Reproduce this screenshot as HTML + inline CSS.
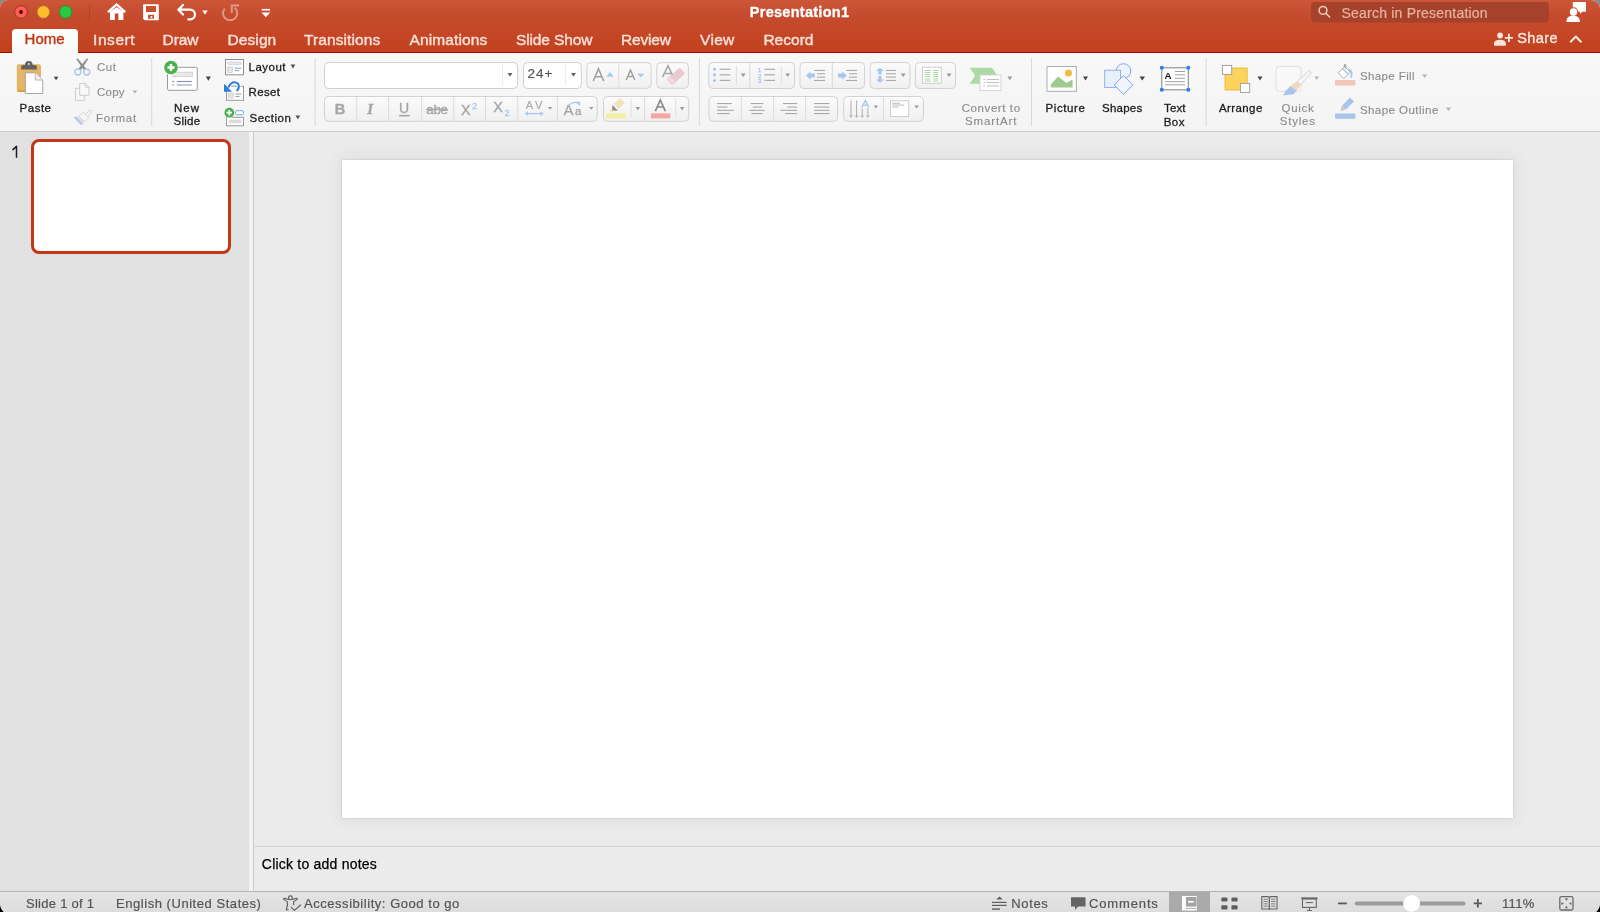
<!DOCTYPE html>
<html><head><meta charset="utf-8">
<style>
*{box-sizing:border-box;margin:0;padding:0}
html,body{width:1600px;height:912px;overflow:hidden;background:linear-gradient(#8a8a8a 0,#8a8a8a 40px,#000 41px)}
body{font-family:"Liberation Sans",sans-serif;position:relative}
.a{position:absolute}
.t{position:absolute;white-space:nowrap;line-height:1}
#win{position:absolute;left:0;top:0;width:1600px;height:915px;background:#ebebeb;border-radius:8px 9px 12px 12px;overflow:hidden}
#title{left:0;top:0;width:1600px;height:53px;background:linear-gradient(#cc5638 0px,#c64b2e 16px,#c2421f 50px);border-bottom:1px solid #a40b00}
#ribbon{left:0;top:53px;width:1600px;height:79px;background:linear-gradient(#f8f8f8,#f4f4f4);border-bottom:1px solid #cdcdcd}
svg{position:absolute;left:0;top:0;will-change:transform}
</style></head>
<body>
<div id="win">
<div id="title" class="a"></div>
<div class="a" style="left:12px;top:29px;width:66px;height:25px;background:linear-gradient(#ffffff,#f8f8f8);border-radius:4px 4px 0 0"></div>
<div id="ribbon" class="a"></div>
<div class="a" style="left:0;top:132px;width:249px;height:759px;background:#e1e1e1"></div>
<div class="a" style="left:249px;top:132px;width:4px;height:759px;background:#f3f3f3"></div>
<div class="a" style="left:253px;top:132px;width:1px;height:759px;background:#cacaca"></div>
<div class="a" style="left:31px;top:139px;width:200px;height:115px;border:3.3px solid #c23816;border-radius:8px;background:#fff"></div>
<div class="a" style="left:342px;top:160px;width:1171px;height:658px;background:#fff;box-shadow:0 0 2px rgba(0,0,0,0.16),0 0 16px 3px rgba(0,0,0,0.055)"></div>
<div class="a" style="left:254px;top:846px;width:1346px;height:1px;background:#d2d2d2"></div>
<div class="a" style="left:0;top:891px;width:1600px;height:1px;background:#b3b3b3"></div>
<div class="a" style="left:0;top:892px;width:1600px;height:20px;background:linear-gradient(#e4e4e4,#dddddd)"></div>
<div class="a" style="left:1169px;top:892px;width:41px;height:20px;background:#aaaaaa"></div>

<svg width="1600" height="912" viewBox="0 0 1600 912">
<defs>
<linearGradient id="btn" x1="0" y1="0" x2="0" y2="1"><stop offset="0" stop-color="#fbfbfb"/><stop offset="1" stop-color="#f0f0f0"/></linearGradient>
</defs>
<!-- ===== TITLE BAR ===== -->
<circle cx="21" cy="12" r="6.3" fill="#fe5f57" stroke="#a8301f" stroke-width="1"/>
<circle cx="21" cy="12" r="1.9" fill="#4d0000"/>
<circle cx="43.4" cy="12" r="6.3" fill="#febb2e" stroke="#b9762a" stroke-width="1"/>
<circle cx="65.6" cy="12" r="6.3" fill="#28c840" stroke="#2e8a36" stroke-width="1"/>
<line x1="89.5" y1="5" x2="89.5" y2="21" stroke="rgba(110,25,0,0.22)" stroke-width="1"/>
<!-- home -->
<polyline points="108.6,11.6 116.6,4.4 124.6,11.6" fill="none" stroke="#fff" stroke-width="2.2" stroke-linecap="round" stroke-linejoin="round"/>
<path d="M110,11.6 L116.6,7.2 L123.4,11.6 V20 H118.4 V13.6 H114.8 V20 H110 Z" fill="#fff"/>
<!-- save -->
<path d="M143.8,4.3 H158.2 Q158.8,4.3 158.8,4.9 V19.7 Q158.8,20.3 158.2,20.3 H144.6 L143.1,18.8 V5 Q143.1,4.3 143.8,4.3 Z M146,6 V11.9 H156 V6 Z M148.1,14.7 V18.8 H154 V14.7 Z" fill="#fff" fill-rule="evenodd"/>
<rect x="150.6" y="16" width="1.7" height="2.2" fill="#fff"/>
<!-- undo -->
<path d="M183,4.9 L178.4,9.7 L183,14.5 M179,9.7 H190.1 A4.85,4.85 0 0 1 190.1,19.4 H188.4" fill="none" stroke="#fff" stroke-width="2.2" stroke-linecap="round" stroke-linejoin="round"/>
<polygon points="202.2,10.4 207.8,10.4 205,14.4" fill="#fff"/>
<!-- redo faded -->
<g fill="none" stroke="rgba(255,255,255,0.42)" stroke-width="2" stroke-linecap="round">
<path d="M224.3,9.2 A7.1,7.1 0 1 0 235.3,8.4"/>
<path d="M231.8,12.3 V5.6 H238.3"/>
</g>
<!-- customize -->
<rect x="261.7" y="8.9" width="8.3" height="1.6" fill="#fff"/>
<polygon points="261.5,12.4 270.2,12.4 265.85,17.3" fill="#fff"/>
<!-- search -->
<rect x="1311" y="2" width="238" height="20.5" rx="4" fill="#a6422b"/>
<circle cx="1323" cy="10.4" r="3.9" fill="none" stroke="#f3cbbd" stroke-width="1.5"/>
<line x1="1325.9" y1="13.3" x2="1329.6" y2="17" stroke="#f3cbbd" stroke-width="1.6" stroke-linecap="round"/>
<!-- person chat -->
<path d="M1572.8,2 H1585.9 V11.7 H1582.2 L1580,13.9 V11.7 H1572.8 Z" fill="#fff"/>
<circle cx="1573.5" cy="12" r="4.7" fill="#c9502f"/>
<circle cx="1573.5" cy="12" r="3.7" fill="#fff"/>
<path d="M1566.3,22 Q1566.3,15.4 1573.2,15.4 Q1580,15.4 1580,22 Z" fill="#fff"/>
<!-- share person+ -->
<ellipse cx="1500.1" cy="35.6" rx="2.9" ry="3" fill="#f8e4dd"/>
<path d="M1494,45.7 V43.6 Q1494,39.8 1500,39.8 Q1505.8,39.8 1505.8,43.6 V45.7 Z" fill="#f8e4dd"/>
<path d="M1504.8,37.8 H1513 M1508.9,33.7 V42" stroke="#f8e4dd" stroke-width="1.8"/>
<polyline points="1570.7,41.8 1575.8,36.5 1580.9,41.8" fill="none" stroke="#f8e4dd" stroke-width="2" stroke-linecap="round" stroke-linejoin="round"/>

<!-- ===== RIBBON ===== -->
<!-- separators -->
<g fill="#d9d9d9">
<rect x="151.2" y="58" width="1" height="68"/>
<rect x="314.6" y="58" width="1" height="68"/>
<rect x="698.9" y="58" width="1" height="68"/>
<rect x="1031" y="58" width="1" height="68"/>
<rect x="1205.6" y="58" width="1" height="68"/>
</g>
<!-- paste -->
<rect x="16.8" y="64.3" width="24.2" height="27.4" rx="2" fill="#e6b466"/>
<rect x="17.5" y="90.4" width="22.8" height="1.3" fill="#d98e1a"/>
<path d="M21.2,69.6 V67 Q21.2,65 23.5,65 H25 Q25,61 28.8,61 Q32.6,61 32.6,65 H34.6 Q36.9,65 36.9,67 V69.6 Z" fill="#626262"/>
<rect x="28" y="63" width="1.6" height="2.2" fill="#e9d0c8"/>
<path d="M25.35,72.8 H35.25 L42.75,80 V93.5 H25.35 Z" fill="#fff" stroke="#9c9c9c" stroke-width="0.9"/>
<path d="M35.25,72.8 V80 H42.75" fill="#efefef" stroke="#b0b0b0" stroke-width="0.9"/>
<polygon points="53.7,76.7 58.5,76.7 56.1,80.2" fill="#444"/>
<!-- scissors -->
<g fill="#8b8b8b" stroke="#8b8b8b" stroke-width="0.3" stroke-linejoin="round">
<polygon points="76.6,59.2 77.6,58.4 85.9,68.6 83.9,70.1"/>
<polygon points="88,59.2 87,58.4 78.7,68.6 80.7,70.1"/>
</g>
<circle cx="77.8" cy="72" r="3" fill="none" stroke="#a9c5ee" stroke-width="1.3"/>
<circle cx="86.7" cy="72" r="3" fill="none" stroke="#a9c5ee" stroke-width="1.3"/>
<!-- copy -->
<path d="M75.6,88.3 H84.3 V100.3 H75.6 Z" fill="#f9f9f9" stroke="#cbcbcb" stroke-width="1"/>
<path d="M79.7,83.6 H85.3 L89,87.3 V95.3 H79.7 Z" fill="#f9f9f9" stroke="#cbcbcb" stroke-width="1"/>
<path d="M85.3,83.6 V87.3 H89" fill="none" stroke="#cbcbcb" stroke-width="0.9"/>
<polygon points="132.6,90.4 137.3,90.4 134.95,93.4" fill="#b0b0b0"/>
<!-- brush -->
<path d="M86.6,115.4 L90.3,111.7" stroke="#d2d2d2" stroke-width="3.8" stroke-linecap="round"/>
<path d="M86.6,115.4 L90.3,111.7" stroke="#f8f8f8" stroke-width="2.2" stroke-linecap="round"/>
<polygon points="79,116.3 83.2,112.1 88.7,117.6 84.5,121.8" fill="#f6f6f6" stroke="#d0d0d0" stroke-width="0.8" stroke-linejoin="round"/>
<polygon points="79,116.3 84.5,121.8 81.4,125.2 73.8,117.6" fill="#ead8d8"/>
<polygon points="73.8,117.6 81.4,125.2 82.8,123.8 75.2,116.2" fill="#a8c8f0"/>
<!-- new slide -->
<rect x="167.5" y="67.3" width="29.8" height="23" rx="1.5" fill="#fff" stroke="#9a9a9a" stroke-width="1"/>
<rect x="172.4" y="72.2" width="20" height="4.4" fill="#e9e9e9" stroke="#c9ccd3" stroke-width="0.8"/>
<rect x="172.2" y="80.9" width="2" height="1.2" fill="#8a94aa"/>
<rect x="176.8" y="80.9" width="15" height="1.2" fill="#8a94aa"/>
<rect x="172.2" y="84.2" width="2" height="1.6" fill="#b9bdc8"/>
<rect x="176.8" y="84.2" width="15" height="1.6" fill="#b9bdc8"/>
<circle cx="171" cy="67.5" r="7.6" fill="#f6f6f6"/>
<circle cx="171" cy="67.5" r="6.8" fill="#4bb04e"/>
<path d="M171,64 V71 M167.5,67.5 H174.5" stroke="#fff" stroke-width="2.4"/>
<polygon points="205.8,76.5 210.9,76.5 208.35,80.7" fill="#444"/>
<!-- layout -->
<rect x="225.5" y="59.5" width="18" height="15.3" fill="#fff" stroke="#8c8c8c" stroke-width="1"/>
<rect x="227.6" y="62" width="13.6" height="2.6" rx="1" fill="#e9e9e9" stroke="#b8c3d6" stroke-width="0.6"/>
<rect x="227.6" y="67" width="5" height="5.5" fill="#e6e6e6" stroke="#c5c5c5" stroke-width="0.6"/>
<rect x="234.6" y="67.7" width="6.7" height="1" fill="#9aa0ad"/>
<rect x="234.6" y="70.1" width="4.5" height="1" fill="#8aa0c8"/>
<polygon points="290.5,64.6 295.4,64.6 292.95,68.4" fill="#555"/>
<!-- reset -->
<rect x="226.5" y="86.3" width="17" height="14" fill="#fff" stroke="#9a9a9a" stroke-width="1"/>
<rect x="228.5" y="93" width="5" height="5" fill="#e6e6e6" stroke="#c5c5c5" stroke-width="0.6"/>
<rect x="235.5" y="93.5" width="6" height="1" fill="#a0a0a0"/>
<rect x="235.5" y="96" width="4" height="1" fill="#a0a0a0"/>
<path d="M236.6,90.9 C239.8,88.6 239.8,83.4 235.6,82.4 C232.6,81.7 230.2,83.4 228.2,87.6" fill="none" stroke="#fff" stroke-width="3.4"/>
<path d="M236.6,90.9 C239.8,88.6 239.8,83.4 235.6,82.4 C232.6,81.7 230.2,83.4 228.2,87.6" fill="none" stroke="#2a7de1" stroke-width="2"/>
<polygon points="224,83.8 224,91.8 232,91.8" fill="#2a7de1"/>
<!-- section -->
<rect x="226.5" y="117.3" width="17" height="8.5" fill="#fff" stroke="#9a9a9a" stroke-width="1"/>
<rect x="228.5" y="119.8" width="13" height="3.5" rx="1.2" fill="#dcdcdc"/>
<rect x="235.6" y="110.7" width="8" height="4" rx="1.3" fill="#fff" stroke="#7aa6e8" stroke-width="1"/>
<circle cx="229.3" cy="112.7" r="5.5" fill="#f6f6f6"/>
<circle cx="229.3" cy="112.7" r="4.9" fill="#4bb04e"/>
<path d="M229.3,110 V115.4 M226.6,112.7 H232" stroke="#fff" stroke-width="1.8"/>
<polygon points="295.4,115.4 300.3,115.4 297.85,119.3" fill="#555"/>

<!-- font name / size -->
<rect x="324.5" y="62.5" width="193" height="26" rx="4" fill="#fff" stroke="#cfcfcf"/>
<line x1="502.5" y1="65" x2="502.5" y2="86" stroke="#ececec"/>
<polygon points="507.5,73 512.5,73 510,76.8" fill="#666"/>
<rect x="523.5" y="62.5" width="57.8" height="26" rx="4" fill="#fff" stroke="#cfcfcf"/>
<line x1="565.5" y1="65" x2="565.5" y2="86" stroke="#ececec"/>
<polygon points="571,73 576,73 573.5,76.8" fill="#666"/>
<!-- grow/shrink -->
<rect x="586.8" y="62.7" width="64.3" height="25.6" rx="4" fill="url(#btn)" stroke="#d2d2d2"/>
<line x1="618.8" y1="63" x2="618.8" y2="88" stroke="#dcdcdc"/>
<path d="M593.3,81 L598.5,68.8 L603.7,81 M595.2,76.8 H601.8" fill="none" stroke="#a0a0a0" stroke-width="1.6"/>
<polygon points="606.2,76.7 613.8,76.7 610,72" fill="#a9c8ef"/>
<path d="M626.2,80 L630.5,70.2 L634.8,80 M627.8,76.5 H633.2" fill="none" stroke="#a0a0a0" stroke-width="1.5"/>
<polygon points="637.2,73.8 644.3,73.8 640.75,77.4" fill="#a9c8ef"/>
<!-- clear formatting -->
<rect x="656.8" y="62.7" width="31.6" height="25.6" rx="4" fill="url(#btn)" stroke="#d2d2d2"/>
<path d="M662.4,77.4 L668,65.8 L673.6,77.4 M664.4,73.4 H671.6" fill="none" stroke="#a8a8a8" stroke-width="1.5"/>
<g transform="rotate(-42 675.9 76.4)">
<rect x="667.4" y="72.7" width="17" height="7.4" rx="1.4" fill="#ebc9d0" stroke="#e3b3ae" stroke-width="0.5"/>
<rect x="667.6" y="72.9" width="4.4" height="7" rx="1.1" fill="#f1d9de"/>
</g>
<!-- B I U row -->
<rect x="324.5" y="96.5" width="272.6" height="24.8" rx="4" fill="url(#btn)" stroke="#d2d2d2"/>
<g fill="#dcdcdc">
<rect x="356.2" y="97" width="1" height="24"/>
<rect x="388.1" y="97" width="1" height="24"/>
<rect x="421.1" y="97" width="1" height="24"/>
<rect x="453.2" y="97" width="1" height="24"/>
<rect x="485" y="97" width="1" height="24"/>
<rect x="517.2" y="97" width="1" height="24"/>
<rect x="556.9" y="97" width="1" height="24"/>
</g>
<g font-family="Liberation Sans" fill="#a6a6a6" stroke="#a6a6a6" stroke-width="0.35">
<text x="334.8" y="113.9" font-size="14.6" font-weight="700">B</text>
<text x="367.3" y="113.9" font-size="15" font-family="Liberation Serif" font-style="italic" font-weight="700">I</text>
<text x="399" y="113.2" font-size="14">U</text>
<rect x="399.3" y="115" width="10.3" height="1.2"/>
<text x="426.2" y="113.9" font-size="13.5" letter-spacing="-0.3">abe</text>
<rect x="426.5" y="109" width="21" height="1"/>
<text x="461" y="115.4" font-size="14.4">X</text>
<text x="493.3" y="112.1" font-size="14.4">X</text>
<text x="525.8" y="108.9" font-size="11" letter-spacing="2.8" fill="#acacac" stroke="#acacac" stroke-width="0.2">AV</text>
<text x="563.7" y="115.4" font-size="14.4">A</text>
<text x="575" y="115.4" font-size="11.5">a</text>
</g>
<g font-family="Liberation Sans" fill="#a9c8ef" stroke="#a9c8ef" stroke-width="0.3">
<text x="471.9" y="109" font-size="9.5">2</text>
<text x="504.4" y="115.6" font-size="9">2</text>
</g>
<path d="M526,113.6 H542.3 M528,112 L525.6,113.6 L528,115.2 M540.3,112 L542.7,113.6 L540.3,115.2" fill="none" stroke="#a9c8ef" stroke-width="1.1"/>
<path d="M568.5,106 Q571,102 577,102.5 L579,104.5" fill="none" stroke="#a9c8ef" stroke-width="1.3"/>
<polygon points="576.5,102 580.2,101.5 580,106" fill="#a9c8ef"/>
<polygon points="548,107 552.2,107 550.1,109.8" fill="#9a9a9a"/>
<polygon points="589.2,107 593.4,107 591.3,109.8" fill="#9a9a9a"/>
<!-- highlight / font color -->
<rect x="603.5" y="96.5" width="85.2" height="24.8" rx="4" fill="url(#btn)" stroke="#d2d2d2"/>
<rect x="644" y="97" width="1" height="24" fill="#dcdcdc"/>
<rect x="630.6" y="99" width="1" height="19" fill="#e0e0e0"/>
<rect x="675.2" y="99" width="1" height="19" fill="#e0e0e0"/>
<rect x="606.3" y="113.4" width="19.7" height="5" fill="#f6f0a2"/>
<polygon points="619.8,98.4 624.3,102.7 618.7,108.4 614.2,104" fill="#f3e3b8" stroke="#efd9a0" stroke-width="0.4" stroke-linejoin="round"/>
<g fill="#eee79a"><circle cx="620.6" cy="103.6" r="0.6"/><circle cx="618.2" cy="104.4" r="0.6"/><circle cx="619.3" cy="106.3" r="0.6"/></g>
<polygon points="612.4,105 618,110.4 611.9,110.8" fill="#8f8f8f"/>
<circle cx="611.2" cy="110.7" r="1.4" fill="#f2ea9a"/>
<polygon points="635.6,107 640,107 637.8,110.5" fill="#9a9a9a"/>
<path d="M655.3,111.1 L660.3,100 L665.3,111.1 M657.2,107 H663.4" fill="none" stroke="#8a8a8a" stroke-width="1.7"/>
<rect x="650.9" y="113.4" width="19.4" height="5" fill="#f5a5a2"/>
<polygon points="679.9,107 684.4,107 682.15,110.5" fill="#9a9a9a"/>

<!-- bullets -->
<rect x="708.8" y="62.5" width="85.8" height="26" rx="4" fill="url(#btn)" stroke="#d2d2d2"/>
<rect x="749.3" y="63" width="1" height="25" fill="#d8d8d8"/>
<rect x="735.9" y="66" width="1" height="19.3" fill="#e0e0e0"/>
<rect x="780.8" y="66" width="1" height="19.3" fill="#e0e0e0"/>
<g fill="#a9c5ee"><circle cx="714.5" cy="69.3" r="1.5"/><circle cx="714.5" cy="74.8" r="1.5"/><circle cx="714.5" cy="80.4" r="1.5"/></g>
<g fill="#ababab">
<rect x="719.7" y="68.7" width="10.6" height="1.2"/><rect x="719.7" y="74.2" width="10.6" height="1.2"/><rect x="719.7" y="79.8" width="10.6" height="1.2"/>
<rect x="764.3" y="68.7" width="10.7" height="1.2"/><rect x="764.3" y="74.2" width="10.7" height="1.2"/><rect x="764.3" y="79.8" width="10.7" height="1.2"/>
</g>
<g font-family="Liberation Sans" font-size="5.9" fill="#a9c5ee" stroke="#a9c5ee" stroke-width="0.25">
<text x="758.1" y="72">1</text><text x="758.1" y="77.7">2</text><text x="758.1" y="83.3">3</text>
</g>
<polygon points="740.6,73.5 745.7,73.5 743.15,77" fill="#9a9a9a"/>
<polygon points="785.4,73.5 790,73.5 787.7,77" fill="#9a9a9a"/>
<!-- indent -->
<rect x="800" y="62.5" width="64.6" height="26" rx="4" fill="url(#btn)" stroke="#d2d2d2"/>
<rect x="831.8" y="63" width="1" height="25" fill="#d8d8d8"/>
<polygon points="806,75.5 810.5,71.4 810.5,73.6 814.8,73.6 814.8,77.5 810.5,77.5 810.5,79.7" fill="#a9c5ee"/>
<polygon points="846.8,75.5 842.3,71.4 842.3,73.6 838,73.6 838,77.5 842.3,77.5 842.3,79.7" fill="#a9c5ee"/>
<g fill="#ababab">
<rect x="814" y="69.9" width="11" height="1.1"/><rect x="817" y="73.2" width="8" height="1.1"/><rect x="817" y="76.6" width="8" height="1.1"/><rect x="814" y="79.9" width="11" height="1.1"/>
<rect x="846" y="69.9" width="11" height="1.1"/><rect x="849" y="73.2" width="8" height="1.1"/><rect x="849" y="76.6" width="8" height="1.1"/><rect x="846" y="79.9" width="11" height="1.1"/>
</g>
<!-- line spacing -->
<rect x="870.2" y="62.5" width="39.7" height="26" rx="4" fill="url(#btn)" stroke="#d2d2d2"/>
<polygon points="875.8,71 879.9,67.8 884,71 881.5,71 881.5,74.5 878.3,74.5 878.3,71" fill="#a9c5ee"/>
<polygon points="875.8,79.5 879.9,82.7 884,79.5 881.5,79.5 881.5,76 878.3,76 878.3,79.5" fill="#a9c5ee"/>
<g fill="#ababab"><rect x="886" y="69.9" width="10" height="1.1"/><rect x="886" y="73.2" width="10" height="1.1"/><rect x="886" y="76.5" width="10" height="1.1"/><rect x="886" y="79.9" width="10" height="1.1"/></g>
<polygon points="900.6,73.5 905.7,73.5 903.15,77" fill="#9a9a9a"/>
<!-- columns -->
<rect x="915.4" y="62.5" width="40.1" height="26" rx="4" fill="url(#btn)" stroke="#d2d2d2"/>
<rect x="922.5" y="67.2" width="18.8" height="16" fill="#fff" stroke="#c8c8c8" stroke-width="0.9"/>
<g fill="#9fd39a">
<rect x="924.8" y="70" width="5.7" height="0.9"/><rect x="933" y="70" width="5.2" height="0.9"/>
<rect x="924.8" y="72" width="5.7" height="0.9"/><rect x="933" y="72" width="5.2" height="0.9"/>
<rect x="924.8" y="74" width="5.7" height="0.9"/><rect x="933" y="74" width="5.2" height="0.9"/>
<rect x="924.8" y="76" width="5.7" height="0.9"/><rect x="933" y="76" width="5.2" height="0.9"/>
<rect x="924.8" y="78.5" width="5.7" height="0.9"/><rect x="933" y="78.5" width="5.2" height="0.9"/>
<rect x="924.8" y="80.6" width="5.7" height="0.9"/><rect x="933" y="80.6" width="5.2" height="0.9"/>
</g>
<polygon points="946.5,73.5 951.6,73.5 949.05,77" fill="#9a9a9a"/>
<!-- smartart -->
<polygon points="969.7,67.8 992,67.8 997.5,75.8 992,83.8 969.7,83.8 975.2,75.8" fill="#acd9a6"/>
<rect x="980" y="75" width="21" height="15.5" fill="#fff" stroke="#d0d0d0" stroke-width="0.9"/>
<g fill="#b8b8b8">
<rect x="983.3" y="79" width="1.8" height="0.9"/><rect x="987" y="79" width="12" height="0.9"/>
<rect x="983.3" y="82.2" width="1.8" height="0.9"/><rect x="987" y="82.2" width="12" height="0.9"/>
<rect x="983.3" y="85.5" width="1.8" height="0.9"/><rect x="987" y="85.5" width="12" height="0.9"/>
</g>
<polygon points="1007.3,76.6 1012.5,76.6 1009.9,80.2" fill="#a0a0a0"/>
<!-- align -->
<rect x="709" y="96.5" width="128.5" height="24.8" rx="4" fill="url(#btn)" stroke="#d2d2d2"/>
<g fill="#dcdcdc"><rect x="740.8" y="97" width="1" height="24"/><rect x="773.1" y="97" width="1" height="24"/><rect x="805.1" y="97" width="1" height="24"/></g>
<g fill="#a9a9a9">
<rect x="717" y="103" width="14.7" height="1.1"/><rect x="717" y="106.5" width="10.5" height="1.1"/><rect x="717" y="109.8" width="16.8" height="1.1"/><rect x="717" y="113" width="12.6" height="1.1"/>
<rect x="750.7" y="103" width="12.7" height="1.1"/><rect x="752.8" y="106.5" width="9.2" height="1.1"/><rect x="749.3" y="109.8" width="15.5" height="1.1"/><rect x="751.4" y="113" width="11.3" height="1.1"/>
<rect x="783" y="103" width="14.1" height="1.1"/><rect x="787.3" y="106.5" width="9.8" height="1.1"/><rect x="780.7" y="109.8" width="16.4" height="1.1"/><rect x="785.2" y="113" width="11.9" height="1.1"/>
<rect x="814" y="103" width="15.5" height="1.1"/><rect x="814" y="106.5" width="15.5" height="1.1"/><rect x="814" y="109.8" width="15.5" height="1.1"/><rect x="814" y="113" width="15.5" height="1.1"/>
</g>
<!-- text direction / align text -->
<rect x="843.7" y="96.5" width="79.7" height="24.8" rx="4" fill="url(#btn)" stroke="#d2d2d2"/>
<rect x="883.1" y="97" width="1" height="24" fill="#dcdcdc"/>
<g stroke="#adadad" stroke-width="1" fill="none">
<path d="M851,100.4 V117 M849.6,115.5 L851,117.3 L852.4,115.5"/>
<path d="M856.6,100.4 V117 M855.2,115.5 L856.6,117.3 L858,115.5"/>
<path d="M862.2,108.5 V117 M860.8,115.5 L862.2,117.3 L863.6,115.5"/>
<path d="M867.9,108.5 V117 M866.5,115.5 L867.9,117.3 L869.3,115.5"/>
</g>
<path d="M861.8,107.5 L865.35,100.4 L868.9,107.5 M863,105.2 H867.7" fill="none" stroke="#a9c5ee" stroke-width="1.3"/>
<polygon points="873.8,105.5 878,105.5 875.9,108.5" fill="#9a9a9a"/>
<rect x="890.5" y="100.8" width="18.2" height="15.8" fill="#fff" stroke="#cacaca" stroke-width="0.9"/>
<g fill="#b5b5b5"><rect x="892.3" y="102.8" width="8" height="0.9"/><rect x="892.3" y="104.6" width="12" height="0.9"/><rect x="892.3" y="106.6" width="6" height="0.9"/></g>
<polygon points="914.3,105.5 918.8,105.5 916.55,108.5" fill="#9a9a9a"/>

<!-- picture -->
<rect x="1047.6" y="67.3" width="29.3" height="24.8" fill="#d8d8d8"/>
<rect x="1047" y="66.5" width="29.3" height="24.8" fill="#fff" stroke="#b0b0b0" stroke-width="1"/>
<polygon points="1050.8,87.6 1050.8,84.5 1058,76.5 1066.5,83 1072.6,79.5 1072.6,87.6" fill="#9dcb90"/>
<circle cx="1068.5" cy="73" r="3.5" fill="#f2bd3c"/>
<polygon points="1083,76.5 1088,76.5 1085.5,80.5" fill="#444"/>
<!-- shapes -->
<circle cx="1123.5" cy="71" r="7.3" fill="#eef4fc" stroke="#7ba7e7" stroke-width="1"/>
<rect x="1104.7" y="70.2" width="15.8" height="17.3" fill="#e8f0fb" stroke="#8fb3ea" stroke-width="1"/>
<polygon points="1123.5,75.6 1132.8,85 1123.5,94.4 1114.2,85" fill="#f0f5fd" stroke="#7ba7e7" stroke-width="1"/>
<polygon points="1139.5,76.5 1145,76.5 1142.25,80.5" fill="#444"/>
<!-- text box -->
<rect x="1161.8" y="67.8" width="26.5" height="22" fill="#fff" stroke="#8a8a8a" stroke-width="1.1"/>
<text x="1164.5" y="78.6" font-family="Liberation Sans" font-size="9.8" font-weight="700" fill="#111">A</text>
<g fill="#a3a3a3"><rect x="1175" y="71" width="10" height="1"/><rect x="1175" y="74.3" width="10" height="1"/><rect x="1175" y="77.8" width="10" height="1"/><rect x="1165" y="81.2" width="20" height="1"/><rect x="1165" y="84.3" width="20" height="1"/></g>
<g fill="#2b7fe0"><circle cx="1161.8" cy="67.8" r="2"/><circle cx="1188.3" cy="67.8" r="2"/><circle cx="1161.8" cy="89.8" r="2"/><circle cx="1188.3" cy="89.8" r="2"/></g>
<!-- arrange -->
<rect x="1225" y="68" width="22.2" height="22" fill="#fcd35c" stroke="#e8b42a" stroke-width="0.8"/>
<rect x="1222.4" y="65.4" width="9.3" height="9" fill="#fff" stroke="#9a9a9a" stroke-width="0.9"/>
<rect x="1240.4" y="83.4" width="9.3" height="9" fill="#fff" stroke="#9a9a9a" stroke-width="0.9"/>
<polygon points="1257.5,76.5 1262.5,76.5 1260,80.5" fill="#444"/>
<!-- quick styles -->
<rect x="1276" y="66.4" width="25" height="25" rx="3.5" fill="#f8f8f8" stroke="#dfdfdf" stroke-width="1"/>
<polygon points="1309,70.6 1311.4,72.8 1300.6,84.7 1297.1,81.5" fill="#f7f7f7" stroke="#cdcdcd" stroke-width="0.8" stroke-linejoin="round"/>
<polygon points="1296.9,81.3 1300.9,84.9 1296.6,90.8 1290.3,86" fill="#f3d8c0"/>
<polygon points="1290.3,86 1296.6,90.8 1293.6,94.2 1283.2,95.4 1285.6,91" fill="#a9c5ee"/>
<polygon points="1314.5,76.5 1319,76.5 1316.75,80" fill="#b5b5b5"/>
<!-- shape fill -->
<rect x="1335" y="80" width="20.4" height="5.5" rx="1" fill="#f0c6be"/>
<g fill="#f6e27a"><circle cx="1339" cy="82.8" r="0.6"/><circle cx="1343" cy="82.8" r="0.6"/><circle cx="1347" cy="82.8" r="0.6"/><circle cx="1351" cy="82.8" r="0.6"/></g>
<polygon points="1338.2,72.8 1344.6,66.6 1350.2,72.2 1343.8,78.6" fill="#fff" stroke="#a6a6a6" stroke-width="0.9" stroke-linejoin="round"/>
<path d="M1342.6,68.7 L1348.5,74.2" stroke="#a9c5ee" stroke-width="1.4"/>
<path d="M1344.3,67.4 V64.8 Q1345,63.4 1345.7,64.8 V68.6" fill="none" stroke="#8d8d8d" stroke-width="0.9"/>
<path d="M1349.4,69.6 Q1352.6,71 1351.3,77" fill="none" stroke="#a9c5ee" stroke-width="1.8" stroke-linecap="round"/>
<polygon points="1422,74.6 1427.4,74.6 1424.7,78" fill="#b5b5b5"/>
<polygon points="1445.8,107.6 1451.3,107.6 1448.55,111" fill="#b5b5b5"/>
<!-- shape outline -->
<rect x="1335" y="113.5" width="20.4" height="5.2" rx="1" fill="#aac4ec"/>
<g transform="rotate(45 1346 105.5)">
<rect x="1343.2" y="97" width="5.6" height="11.5" fill="#a9c5ee"/>
<polygon points="1343.2,108.5 1348.8,108.5 1346,113.5" fill="#c8c8c8"/>
</g>

<path d="M12.9,149.6 L16.5,146.4 V157.2" fill="none" stroke="#1c1c1c" stroke-width="1.5" stroke-linecap="round" stroke-linejoin="round"/>
<!-- ===== STATUS BAR ===== -->
<g fill="none" stroke="#5c5c5c" stroke-width="1.1" stroke-linecap="round" stroke-linejoin="round">
<circle cx="290.4" cy="897.8" r="1.9"/>
<path d="M288.4,899.6 L284.6,898.3 Q283.2,898.3 283.7,899.4 L287.3,901.6 L287.5,905 L286.3,909.8 H288.3"/>
<path d="M292.4,899.6 L296.3,898.3 Q297.7,898.3 297.3,899.4 L293.6,901.6 V904.4"/>
<path d="M291.3,907.3 L294.5,910.4 L300.5,905"/>
</g>
<polygon points="996.1,899.4 999.5,896.4 1002.9,899.4" fill="#5e5e5e"/>
<rect x="992" y="901.8" width="14.6" height="1.2" fill="#5e5e5e"/>
<rect x="992" y="904.8" width="14.6" height="1.2" fill="#5e5e5e"/>
<rect x="992" y="908.3" width="7.9" height="1.6" fill="#6a6a6a"/>
<path d="M1071.6,897.2 H1084.6 Q1085.5,897.2 1085.5,898.1 V905.7 Q1085.5,906.6 1084.6,906.6 H1078 L1075,909.9 V906.6 H1071.6 Q1071,906.6 1071,905.7 V898.1 Q1071,897.2 1071.6,897.2 Z" fill="#646464"/>
<rect x="1182" y="895.9" width="15" height="14.6" rx="1" fill="#fff"/>
<rect x="1185.9" y="897" width="10.7" height="9.6" fill="#a3a3a3"/>
<rect x="1188" y="901" width="5.7" height="1.6" fill="#fff"/>
<rect x="1185.9" y="907.9" width="10.7" height="0.9" fill="#a3a3a3"/>
<g fill="#5e5e5e">
<rect x="1221.3" y="897.6" width="6.2" height="3.9" rx="1.2"/><rect x="1231.4" y="897.6" width="6.2" height="3.9" rx="1.2"/>
<rect x="1221.3" y="905.2" width="6.2" height="4.2" rx="1.2"/><rect x="1231.4" y="905.2" width="6.2" height="4.2" rx="1.2"/>
</g>
<g fill="none" stroke="#666" stroke-width="1.1">
<path d="M1261.8,896.6 H1268 Q1269.4,896.6 1269.4,898 V909.8 Q1269.4,909 1268,909 H1261.8 Z"/>
<path d="M1277,896.6 H1270.8 Q1269.4,896.6 1269.4,898 V909.8 Q1269.4,909 1270.8,909 H1277 Z"/>
</g>
<g fill="#777">
<rect x="1263.5" y="898.8" width="4.3" height="0.9"/><rect x="1263.5" y="901.1" width="4.3" height="0.9"/><rect x="1263.5" y="903.4" width="4.3" height="0.9"/><rect x="1263.5" y="905.7" width="4.3" height="0.9"/>
<rect x="1271" y="898.8" width="4.3" height="0.9"/><rect x="1271" y="901.1" width="4.3" height="0.9"/><rect x="1271" y="903.4" width="4.3" height="0.9"/><rect x="1271" y="905.7" width="4.3" height="0.9"/>
</g>
<rect x="1301.2" y="897.4" width="16.3" height="1.6" fill="#666"/>
<rect x="1302.5" y="899" width="13.8" height="8.4" fill="none" stroke="#666" stroke-width="1.1"/>
<path d="M1305.8,902.6 H1313 M1309.4,907.4 V910.3 M1307,910.5 H1311.8" stroke="#666" stroke-width="1"/>
<rect x="1338" y="902.5" width="8.8" height="1.8" fill="#5a5a5a"/>
<rect x="1354.7" y="901.6" width="110.8" height="4" rx="2" fill="#9b9b9b"/>
<circle cx="1411.6" cy="903.6" r="8.8" fill="rgba(0,0,0,0.08)"/>
<circle cx="1411.6" cy="903.4" r="8.5" fill="#fff"/>
<path d="M1473.7,903.3 H1482 M1477.85,899 V907.6" stroke="#5a5a5a" stroke-width="1.8"/>
<rect x="1559.8" y="896.7" width="13.2" height="13.3" rx="1.5" fill="none" stroke="#6a6a6a" stroke-width="1.3"/>
<g fill="#6a6a6a">
<polygon points="1564.9,898.5 1567.9,898.5 1566.4,901"/><rect x="1566" y="898" width="0.8" height="1.5"/>
<polygon points="1564.9,908.2 1567.9,908.2 1566.4,905.7"/>
<polygon points="1561.4,901.9 1561.4,904.9 1563.9,903.4"/>
<polygon points="1571.4,901.9 1571.4,904.9 1568.9,903.4"/>
</g>
</svg>

<div id="txt" style="position:absolute;left:0;top:0;width:1600px;height:912px;will-change:transform"><div class="t" style="left:24.60px;top:31.10px;font-size:15px;color:#c4300f;font-weight:400;letter-spacing:-0.033px;-webkit-text-stroke:0.35px #c4300f;">Home</div>
<div class="t" style="left:93.00px;top:31.78px;font-size:15.5px;color:#f8e0d8;font-weight:400;letter-spacing:0.580px;-webkit-text-stroke:0.4px #f8e0d8;">Insert</div>
<div class="t" style="left:162.60px;top:31.78px;font-size:15.5px;color:#f8e0d8;font-weight:400;letter-spacing:-0.067px;-webkit-text-stroke:0.4px #f8e0d8;">Draw</div>
<div class="t" style="left:227.40px;top:31.78px;font-size:15.5px;color:#f8e0d8;font-weight:400;letter-spacing:0.120px;-webkit-text-stroke:0.4px #f8e0d8;">Design</div>
<div class="t" style="left:304.00px;top:31.78px;font-size:15.5px;color:#f8e0d8;font-weight:400;letter-spacing:0.100px;-webkit-text-stroke:0.4px #f8e0d8;">Transitions</div>
<div class="t" style="left:409.50px;top:31.78px;font-size:15.5px;color:#f8e0d8;font-weight:400;letter-spacing:0.122px;-webkit-text-stroke:0.4px #f8e0d8;">Animations</div>
<div class="t" style="left:515.90px;top:31.78px;font-size:15.5px;color:#f8e0d8;font-weight:400;letter-spacing:-0.100px;-webkit-text-stroke:0.4px #f8e0d8;">Slide Show</div>
<div class="t" style="left:621.00px;top:31.78px;font-size:15.5px;color:#f8e0d8;font-weight:400;letter-spacing:-0.200px;-webkit-text-stroke:0.4px #f8e0d8;">Review</div>
<div class="t" style="left:700.00px;top:31.78px;font-size:15.5px;color:#f8e0d8;font-weight:400;letter-spacing:0.333px;-webkit-text-stroke:0.4px #f8e0d8;">View</div>
<div class="t" style="left:763.40px;top:31.78px;font-size:15.5px;color:#f8e0d8;font-weight:400;letter-spacing:0.020px;-webkit-text-stroke:0.4px #f8e0d8;">Record</div>
<div class="t" style="left:749.80px;top:4.93px;font-size:14.5px;color:#ffffff;font-weight:700;letter-spacing:0.275px;-webkit-text-stroke:0.3px #fff;">Presentation1</div>
<div class="t" style="left:1341.50px;top:6.15px;font-size:14px;color:#e7b2a2;font-weight:400;letter-spacing:0.214px;-webkit-text-stroke:0.2px #e7b2a2;">Search in Presentation</div>
<div class="t" style="left:1517.20px;top:30.93px;font-size:14.5px;color:#f9e8e2;font-weight:400;letter-spacing:0.450px;-webkit-text-stroke:0.35px #f9e8e2;">Share</div>
<div class="t" style="left:19.60px;top:103.07px;font-size:11.5px;color:#1c1c1c;font-weight:400;letter-spacing:0.500px;-webkit-text-stroke:0.3px #1c1c1c;">Paste</div>
<div class="t" style="left:97.00px;top:61.82px;font-size:11.5px;color:#8c8c8c;font-weight:400;letter-spacing:0.500px;-webkit-text-stroke:0.15px #8c8c8c;">Cut</div>
<div class="t" style="left:97.00px;top:87.07px;font-size:11.5px;color:#8c8c8c;font-weight:400;letter-spacing:0.233px;-webkit-text-stroke:0.15px #8c8c8c;">Copy</div>
<div class="t" style="left:96.00px;top:112.87px;font-size:11.5px;color:#8c8c8c;font-weight:400;letter-spacing:0.740px;-webkit-text-stroke:0.15px #8c8c8c;">Format</div>
<div class="t" style="left:174.00px;top:103.07px;font-size:11.5px;color:#1c1c1c;font-weight:400;letter-spacing:1.000px;-webkit-text-stroke:0.3px #1c1c1c;">New</div>
<div class="t" style="left:173.60px;top:115.77px;font-size:11.5px;color:#1c1c1c;font-weight:400;letter-spacing:0.250px;-webkit-text-stroke:0.3px #1c1c1c;">Slide</div>
<div class="t" style="left:248.50px;top:62.07px;font-size:11.5px;color:#1c1c1c;font-weight:400;letter-spacing:0.500px;-webkit-text-stroke:0.3px #1c1c1c;">Layout</div>
<div class="t" style="left:248.50px;top:87.37px;font-size:11.5px;color:#1c1c1c;font-weight:400;letter-spacing:0.375px;-webkit-text-stroke:0.3px #1c1c1c;">Reset</div>
<div class="t" style="left:249.50px;top:113.07px;font-size:11.5px;color:#1c1c1c;font-weight:400;letter-spacing:0.500px;-webkit-text-stroke:0.3px #1c1c1c;">Section</div>
<div class="t" style="left:527.60px;top:67.37px;font-size:13.5px;color:#555555;font-weight:400;letter-spacing:0.950px;-webkit-text-stroke:0.2px #555555;">24+</div>
<div class="t" style="left:961.70px;top:103.07px;font-size:11.5px;color:#8c8c8c;font-weight:400;letter-spacing:0.589px;-webkit-text-stroke:0.15px #8c8c8c;">Convert to</div>
<div class="t" style="left:965.00px;top:116.47px;font-size:11.5px;color:#8c8c8c;font-weight:400;letter-spacing:0.857px;-webkit-text-stroke:0.15px #8c8c8c;">SmartArt</div>
<div class="t" style="left:1045.50px;top:102.97px;font-size:11.5px;color:#1c1c1c;font-weight:400;letter-spacing:0.583px;-webkit-text-stroke:0.3px #1c1c1c;">Picture</div>
<div class="t" style="left:1102.00px;top:102.97px;font-size:11.5px;color:#1c1c1c;font-weight:400;letter-spacing:0.240px;-webkit-text-stroke:0.3px #1c1c1c;">Shapes</div>
<div class="t" style="left:1164.00px;top:102.97px;font-size:11.5px;color:#1c1c1c;font-weight:400;letter-spacing:0.133px;-webkit-text-stroke:0.3px #1c1c1c;">Text</div>
<div class="t" style="left:1163.80px;top:116.67px;font-size:11.5px;color:#1c1c1c;font-weight:400;letter-spacing:0.400px;-webkit-text-stroke:0.3px #1c1c1c;">Box</div>
<div class="t" style="left:1219.00px;top:103.07px;font-size:11.5px;color:#1c1c1c;font-weight:400;letter-spacing:0.400px;-webkit-text-stroke:0.3px #1c1c1c;">Arrange</div>
<div class="t" style="left:1281.60px;top:103.07px;font-size:11.5px;color:#8c8c8c;font-weight:400;letter-spacing:0.675px;-webkit-text-stroke:0.15px #8c8c8c;">Quick</div>
<div class="t" style="left:1279.80px;top:116.47px;font-size:11.5px;color:#8c8c8c;font-weight:400;letter-spacing:0.760px;-webkit-text-stroke:0.15px #8c8c8c;">Styles</div>
<div class="t" style="left:1359.90px;top:71.32px;font-size:11.5px;color:#8c8c8c;font-weight:400;letter-spacing:0.400px;-webkit-text-stroke:0.15px #8c8c8c;">Shape Fill</div>
<div class="t" style="left:1359.90px;top:104.87px;font-size:11.5px;color:#8c8c8c;font-weight:400;letter-spacing:0.458px;-webkit-text-stroke:0.15px #8c8c8c;">Shape Outline</div>
<div class="t" style="left:261.80px;top:856.85px;font-size:14px;color:#000000;font-weight:400;letter-spacing:0.218px;-webkit-text-stroke:0.25px #000;">Click to add notes</div>
<div class="t" style="left:26.00px;top:896.80px;font-size:13px;color:#555555;font-weight:400;letter-spacing:0.273px;-webkit-text-stroke:0.2px #555555;">Slide 1 of 1</div>
<div class="t" style="left:116.00px;top:896.80px;font-size:13px;color:#555555;font-weight:400;letter-spacing:0.545px;-webkit-text-stroke:0.2px #555555;">English (United States)</div>
<div class="t" style="left:304.00px;top:896.80px;font-size:13px;color:#555555;font-weight:400;letter-spacing:0.542px;-webkit-text-stroke:0.2px #555555;">Accessibility: Good to go</div>
<div class="t" style="left:1011.30px;top:897.00px;font-size:13px;color:#555555;font-weight:400;letter-spacing:0.650px;-webkit-text-stroke:0.2px #555555;">Notes</div>
<div class="t" style="left:1089.00px;top:897.00px;font-size:13px;color:#555555;font-weight:400;letter-spacing:0.857px;-webkit-text-stroke:0.2px #555555;">Comments</div>
<div class="t" style="left:1502.00px;top:897.00px;font-size:13px;color:#555555;font-weight:400;letter-spacing:0.333px;-webkit-text-stroke:0.2px #555555;">111%</div></div>
</div>
</body></html>
